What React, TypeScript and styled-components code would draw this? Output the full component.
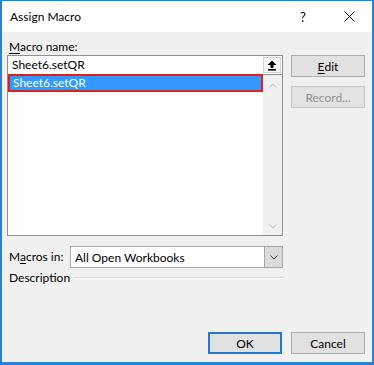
import React from "react";
import styled, { createGlobalStyle } from "styled-components";

const Global = createGlobalStyle`
  html, body { margin: 0; padding: 0; background: #ffffff; }
  body { font-family: Lato, "Noto Sans", sans-serif; font-size: 12px; color: #000; }
  * { box-sizing: border-box; }
`;

const Window = styled.div`
  width: 374px;
  height: 365px;
  display: flex;
  flex-direction: column;
  border-style: solid;
  border-color: #2783d4;
  border-width: 1px 2px 3px 2px;
  background: #f0f0f0;
`;

const TitleBar = styled.div`
  height: 31px;
  background: #ffffff;
  display: flex;
  align-items: center;
  padding-left: 8px;
  font-size: 12px;
`;

const TitleText = styled.div`
  flex: 1;
  padding-bottom: 1px;
`;

const TitleButton = styled.div<{ $w: number }>`
  width: ${(p) => p.$w}px;
  height: 31px;
  display: flex;
  align-items: center;
  justify-content: center;
  font-size: 13px;
`;

const Body = styled.div`
  flex: 1;
  display: flex;
  flex-direction: column;
  padding: 7px 7px 8px 5px;
`;

const Top = styled.div`
  display: flex;
  gap: 8px;
`;

const LeftCol = styled.div`
  width: 276px;
  display: flex;
  flex-direction: column;
`;

const RightCol = styled.div`
  width: 74px;
  display: flex;
  flex-direction: column;
  gap: 9px;
  padding-top: 16px;
`;

const Label = styled.div<{ $indent?: number }>`
  height: 16px;
  line-height: 16px;
  padding-left: ${(p) => p.$indent ?? 2}px;
  white-space: nowrap;
`;

const U = styled.span`
  text-decoration: underline;
  text-underline-offset: 2px;
`;

const TextBox = styled.div`
  height: 20px;
  border: 1px solid #8f8f8f;
  background: #ffffff;
  display: flex;
  align-items: center;
  padding-left: 4px;
`;

const TextValue = styled.div`
  flex: 1;
  line-height: 18px;
`;

const CollapseButton = styled.div`
  width: 18px;
  height: 16px;
  margin-right: 1px;
  border: 1px solid #d2d2d2;
  background: #fcfcfc;
  display: flex;
  align-items: center;
  justify-content: center;
`;

const ListBox = styled.div`
  height: 161px;
  border: 1px solid #8f8f8f;
  border-top: none;
  background: #ffffff;
  display: flex;
`;

const ListItems = styled.div`
  flex: 1;
  display: flex;
  flex-direction: column;
`;

const SelectedItem = styled.div`
  position: relative;
  margin-top: -1px;
  height: 18px;
  border: 2px solid #dd1f26;
  background: #3399ff;
  color: #ffffff;
  line-height: 14px;
  padding-left: 3px;
`;

const ScrollTrack = styled.div`
  width: 19px;
  background: #f0f0f0;
  display: flex;
  flex-direction: column;
  justify-content: space-between;
  align-items: center;
  padding: 8px 0 6px;
`;

const Button = styled.div<{ $default?: boolean; $disabled?: boolean }>`
  width: 74px;
  height: 22px;
  display: flex;
  align-items: center;
  justify-content: center;
  background: ${(p) => (p.$disabled ? "#e3e3e3" : "#e1e1e1")};
  border: ${(p) => (p.$default ? "2px solid #2279cf" : p.$disabled ? "1px solid #c6c6c6" : "1px solid #adadad")};
  color: ${(p) => (p.$disabled ? "#8f8f8f" : "#000")};
`;

const Row = styled.div`
  display: flex;
  align-items: center;
  width: 276px;
`;

const MacrosRow = styled(Row)`
  margin-top: 10px;
  height: 22px;
`;

const Select = styled.div`
  margin-left: auto;
  width: 213px;
  height: 22px;
  border: 1px solid #acacac;
  background: #ffffff;
  display: flex;
  align-items: center;
  padding-left: 4px;
`;

const SelectValue = styled.div`
  flex: 1;
`;

const DropButton = styled.div`
  width: 19px;
  height: 22px;
  margin: -1px -1px -1px 0;
  border: 1px solid #a6a6a6;
  background: #dadada;
  display: flex;
  align-items: center;
  justify-content: center;
`;

const DescRow = styled(Row)`
  margin-top: 2px;
  height: 16px;
  gap: 4px;
`;

const Rule = styled.div`
  flex: 1;
  height: 2px;
  border-top: 1px solid #d9d9d9;
  border-bottom: 1px solid #ffffff;
  margin-top: -1px;
`;

const Spacer = styled.div`
  flex: 1;
`;

const Footer = styled.div`
  display: flex;
  justify-content: flex-end;
  gap: 9px;
  width: 358px;
  padding-left: 2px;
`;

const Chevron = ({ up, color }: { up?: boolean; color: string }) => (
  <svg width="8" height="5" viewBox="0 0 8 5">
    <path
      d={up ? "M0.5 4.5 L4 1 L7.5 4.5" : "M0.5 0.5 L4 4 L7.5 0.5"}
      fill="none"
      stroke={color}
      strokeWidth="1"
    />
  </svg>
);

export default function App() {
  return (
    <>
      <Global />
      <Window>
        <TitleBar>
          <TitleText>Assign Macro</TitleText>
          <TitleButton $w={46}>?</TitleButton>
          <TitleButton $w={46}>
            <svg width="11" height="11" viewBox="0 0 11 11">
              <path d="M0.5 0.5 L10.5 10.5 M10.5 0.5 L0.5 10.5" stroke="#000" strokeWidth="1" />
            </svg>
          </TitleButton>
        </TitleBar>
        <Body>
          <Top>
            <LeftCol>
              <Label>
                <U>M</U>acro name:
              </Label>
              <TextBox>
                <TextValue>Sheet6.setQR</TextValue>
                <CollapseButton>
                  <svg width="10" height="11" viewBox="0 0 10 11">
                    <path d="M5 0.5 L9.5 5 H6.5 V8 H3.5 V5 H0.5 Z" fill="#000" />
                    <rect x="1" y="9" width="8" height="1.6" fill="#000" />
                  </svg>
                </CollapseButton>
              </TextBox>
              <ListBox>
                <ListItems>
                  <SelectedItem>Sheet6.setQR</SelectedItem>
                </ListItems>
                <ScrollTrack>
                  <Chevron up color="#c2c2c2" />
                  <Chevron color="#c2c2c2" />
                </ScrollTrack>
              </ListBox>
            </LeftCol>
            <RightCol>
              <Button>
                <U>E</U>dit
              </Button>
              <Button $disabled>Record...</Button>
            </RightCol>
          </Top>
          <MacrosRow>
            <Label>
              M<U>a</U>cros in:
            </Label>
            <Select>
              <SelectValue>All Open Workbooks</SelectValue>
              <DropButton>
                <Chevron color="#404040" />
              </DropButton>
            </Select>
          </MacrosRow>
          <DescRow>
            <Label>Description</Label>
            <Rule />
          </DescRow>
          <Spacer />
          <Footer>
            <Button $default>OK</Button>
            <Button>Cancel</Button>
          </Footer>
        </Body>
      </Window>
    </>
  );
}
